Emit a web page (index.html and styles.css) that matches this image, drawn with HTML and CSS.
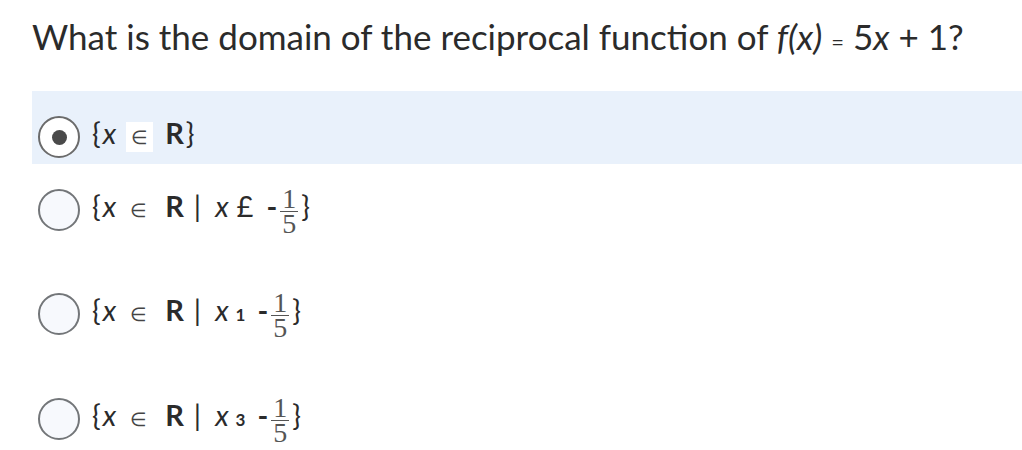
FILE: index.html
```html
<!DOCTYPE html>
<html>
<head>
<meta charset="utf-8">
<link rel="stylesheet" href="styles.css">
</head>
<body>
<div class="question">
  <h1 class="title">What is the domain of the reciprocal function of <i>f</i><i>(x)</i> <span class="eq">=</span> 5<i>x</i> + 1?</h1>
  <div class="answers">
    <div class="answer selected short">
      <span class="radio"><span class="dot"></span></span>
      <span class="expr"><span class="br">{</span><i>x</i><span class="in boxed">∈</span><b>R</b><span class="br">}</span></span>
    </div>
    <div class="answer">
      <span class="radio"></span>
      <span class="expr"><span class="br">{</span><i>x</i><span class="in">∈</span><b>R</b><span class="bar">|</span><i>x</i><span class="sym">£</span><span class="minus">-</span><span class="frac"><span class="num">1</span><span class="den">5</span></span><span class="br">}</span></span>
    </div>
    <div class="answer">
      <span class="radio"></span>
      <span class="expr"><span class="br">{</span><i>x</i><span class="in">∈</span><b>R</b><span class="bar">|</span><i>x</i><span class="small">1</span><span class="minus">-</span><span class="frac"><span class="num">1</span><span class="den">5</span></span><span class="br">}</span></span>
    </div>
    <div class="answer last">
      <span class="radio"></span>
      <span class="expr"><span class="br">{</span><i>x</i><span class="in">∈</span><b>R</b><span class="bar">|</span><i>x</i><span class="small">3</span><span class="minus">-</span><span class="frac"><span class="num">1</span><span class="den">5</span></span><span class="br">}</span></span>
    </div>
  </div>
</div>
</body>
</html>
```

FILE: styles.css
```css
html, body {
  margin: 0;
  padding: 0;
  background: #ffffff;
  overflow: hidden;
}
body {
  font-family: Lato, "Open Sans", sans-serif;
  color: #2b2b2b;
}
.question {
  padding-left: 32px;
}
.title {
  margin: 0;
  padding-top: 14px;
  height: 91px;
  box-sizing: border-box;
  font-size: 35px;
  font-weight: 400;
  line-height: 44px;
}
.title i {
  font-style: italic;
}
.eq {
  font-size: 22px;
}
.answers {
  display: flex;
  flex-direction: column;
}
.answer {
  display: flex;
  align-items: flex-start;
  padding-top: 25px;
  padding-left: 6px;
  box-sizing: border-box;
  height: 104px;
}
.answer + .answer + .answer {
  height: 105px;
}
.answer.short {
  height: 73px;
}
.answer.last {
  height: 77px;
}
.selected {
  background: #e9f1fb;
}
.radio {
  width: 42px;
  height: 42px;
  box-sizing: border-box;
  border: 2px solid #737679;
  border-radius: 50%;
  background: #f7f9fd;
  display: flex;
  align-items: center;
  justify-content: center;
  flex: none;
}
.selected .radio {
  background: #ffffff;
  border-color: #6b6b6b;
}
.dot {
  width: 15px;
  height: 15px;
  border-radius: 50%;
  background: #4a4a4a;
}
.expr {
  margin-left: 12px;
  margin-top: -4px;
  font-size: 29px;
  line-height: 42px;
  display: flex;
  align-items: baseline;
}
.expr i {
  font-style: italic;
  margin-left: 2px;
  letter-spacing: 2px;
}
.expr b {
  font-weight: 700;
  letter-spacing: 2px;
}
.in {
  font-size: 19px;
  margin: 0 18px 0 12px;
  color: #444;
}
.in.boxed {
  background: #ffffff;
  padding: 0 5px;
  margin: 0 12px 0 8px;
  line-height: 30px;
}
.bar {
  margin: 0 12px 0 8px;
}
.sym {
  margin-left: 6px;
  letter-spacing: 1px;
}
.small {
  font-size: 17px;
  font-weight: 700;
  margin-left: 5px;
}
.minus {
  margin-left: 12px;
  font-weight: 700;
}
.frac {
  display: inline-flex;
  flex-direction: column;
  align-items: center;
  font-family: "Liberation Serif", serif;
  font-size: 28px;
  line-height: 23px;
  color: #555;
  margin: 0 3px 0 3px;
  position: relative;
  top: -9px;
}
.num {
  border-bottom: 1.5px solid #555;
  padding: 0 2px 1px;
}
.den {
  padding: 0 2px;
}
```
